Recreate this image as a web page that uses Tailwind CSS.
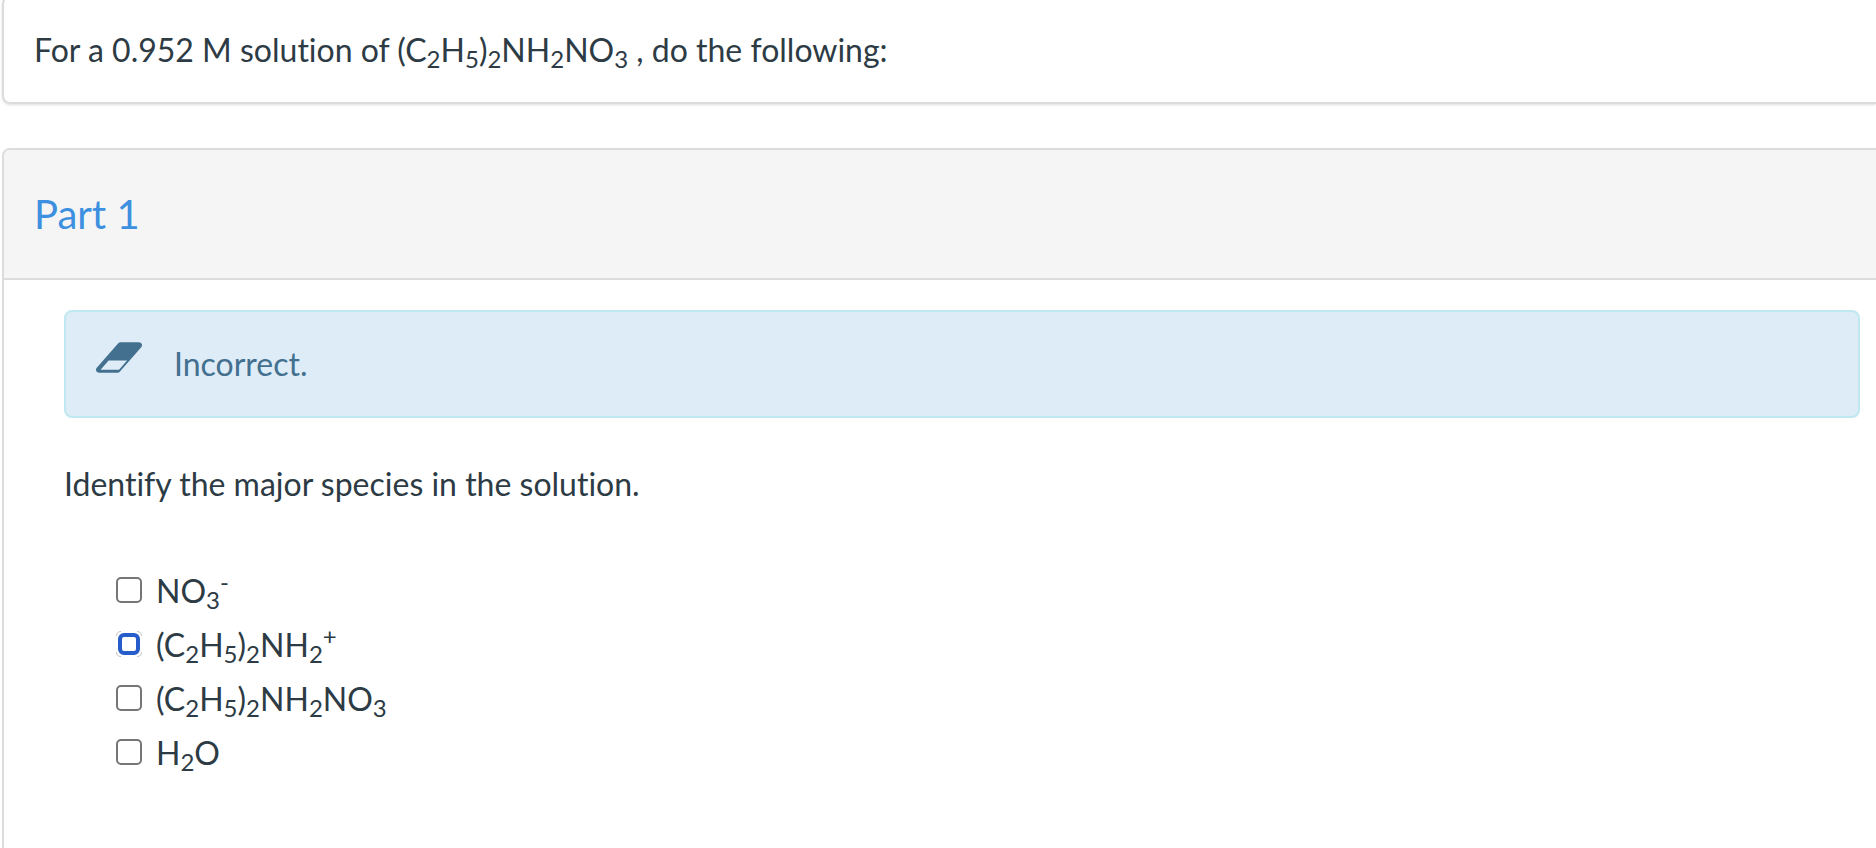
<!DOCTYPE html>
<html lang="en">
  <head>
    <meta charset="UTF-8" />
    <meta name="viewport" content="width=device-width, initial-scale=1" />
    <title>Part 1</title>
    <script src="https://cdn.jsdelivr.net/npm/@tailwindcss/browser@4"></script>
  </head>
  <body class="bg-white pl-0.5 font-[Lato,sans-serif] text-[32px] leading-12 text-[#2d3b45] [font-variant-ligatures:none] overflow-x-hidden">
    <!-- QUESTION -->
    <section class="-mt-1 rounded-l-lg border-2 border-r-0 border-[#dcdcdc] px-[30px] py-7 shadow-sm">
      <p>
        For a 0.952 M solution of (C<sub>2</sub>H<sub>5</sub>)<sub>2</sub>NH<sub>2</sub>NO<sub>3</sub> , do the following:
      </p>
    </section>

    <!-- PART 1 -->
    <section class="mt-11 min-h-[calc(100vh-148px)] rounded-tl-lg border-t-2 border-l-2 border-[#dcdcdc]">
      <header class="rounded-tl-md border-b-2 border-[#dcdcdc] bg-[#f5f5f5] px-[30px] py-10">
        <h2 class="text-[40px] leading-12 text-[#3d8fe0]">Part 1</h2>
      </header>

      <div class="pt-[30px] pr-4 pl-[60px]">
        <div role="alert" class="flex items-start gap-8 rounded-lg border-2 border-[#c0e8f0] bg-[#deecf7] px-[30px] py-7 text-[#43708f]">
          <svg class="mt-0.5 h-[31px] w-[46px]" viewBox="0 256 1920 1280" fill="currentColor" aria-hidden="true">
            <path d="M960 1408l336-384h-768l-336 384h768zM1909 331q15 34 9.500 71.500t-30.500 65.500l-896 1024q-38 44-96 44h-768q-38 0-69.500-20.500t-47.500-54.500q-15-34-9.500-71.500t30.500-65.500l896-1024q38-44 96-44h768q38 0 69.500 20.500t47.500 54.500z" />
          </svg>
          <p>Incorrect.</p>
        </div>

        <fieldset class="mt-[42px]">
          <legend>Identify the major species in the solution.</legend>

          <div class="pt-14 pl-[52px]">
            <div class="flex h-[54px] items-center gap-3.5">
              <input type="checkbox" id="species1" class="mb-0.5 size-[26px] appearance-none rounded-[5px] border-2 border-[#767676] bg-white" />
              <label for="species1">NO<sub>3</sub><sup>-</sup></label>
            </div>

            <!-- highlighted option, corners of the box show behind the ring -->
            <div class="flex h-[54px] items-center gap-3.5">
              <span class="relative mb-0.5 grid size-[26px] place-items-center">
                <svg class="pointer-events-none absolute inset-0 size-[26px]" viewBox="0 0 26 26" fill="none" stroke="#c4c4c4" aria-hidden="true">
                  <path d="M.5 5Q.5 .5 5 .5M21 .5Q25.500 .5 25.500 5M25.500 21Q25.500 25.500 21 25.500M5 25.500Q.5 25.500 .5 21" />
                </svg>
                <input type="checkbox" id="species2" class="size-[22px] appearance-none rounded-md border-4 border-[#275dcb] bg-white" />
              </span>
              <label for="species2">(C<sub>2</sub>H<sub>5</sub>)<sub>2</sub>NH<sub>2</sub><sup>+</sup></label>
            </div>

            <div class="flex h-[54px] items-center gap-3.5">
              <input type="checkbox" id="species3" class="mb-0.5 size-[26px] appearance-none rounded-[5px] border-2 border-[#767676] bg-white" />
              <label for="species3">(C<sub>2</sub>H<sub>5</sub>)<sub>2</sub>NH<sub>2</sub>NO<sub>3</sub></label>
            </div>

            <div class="flex h-[54px] items-center gap-3.5">
              <input type="checkbox" id="species4" class="mb-0.5 size-[26px] appearance-none rounded-[5px] border-2 border-[#767676] bg-white" />
              <label for="species4">H<sub>2</sub>O</label>
            </div>
          </div>
        </fieldset>
      </div>
    </section>
  </body>
</html>
